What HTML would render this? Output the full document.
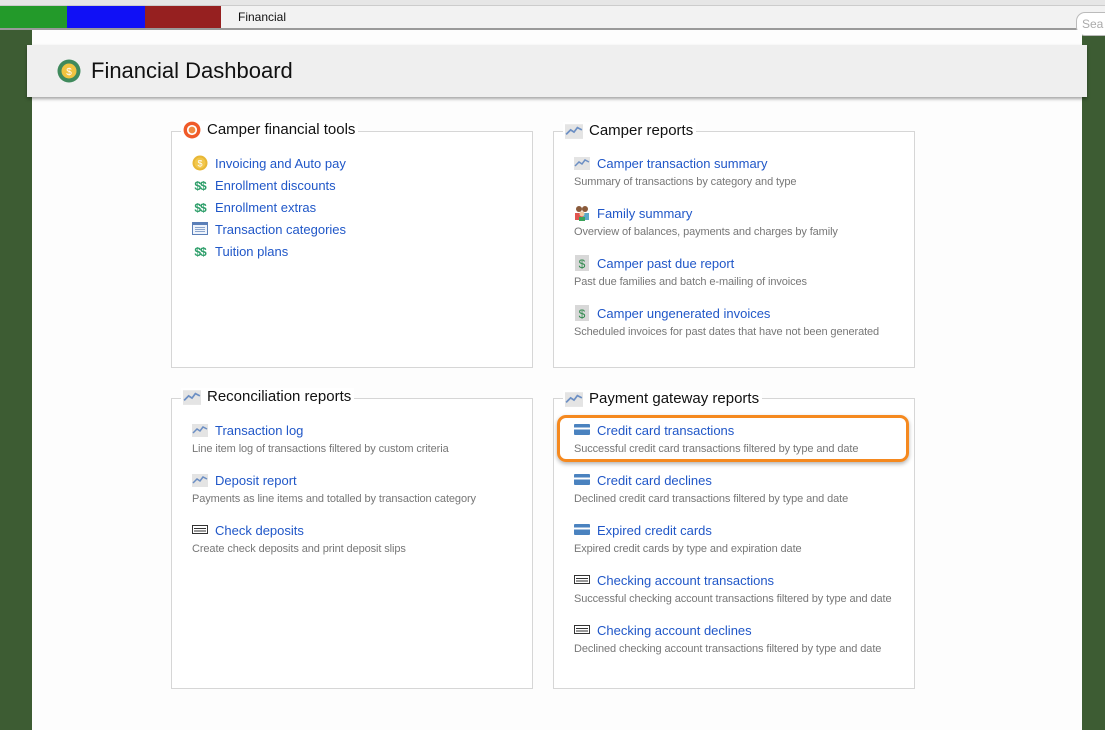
<!DOCTYPE html>
<html><head><meta charset="utf-8"><style>
*{margin:0;padding:0;box-sizing:border-box}
body{width:1105px;height:714px;overflow:hidden;background:#3d5c33;font-family:"Liberation Sans",sans-serif;position:relative}
.a{position:absolute}
.top{left:0;top:0;width:1105px;height:6px;background:#e6e6e6;border-bottom:1px solid #ccc}
.tabs{left:0;top:6px;width:1105px;height:24px;background:#f2f2f2;border-bottom:2px solid #9a9a9a}
.main{left:32px;top:30px;width:1050px;height:700px;background:#fdfdfd}
.hdr{left:27px;top:45px;width:1060px;height:52px;background:#efefef;box-shadow:0 2px 3px rgba(0,0,0,.35)}
.panel{border:1px solid #d6d6d6;background:#fff}
.leg{font-size:15px;color:#111;background:#fff;padding:0 3px 0 2px;height:18px;line-height:18px;display:flex;align-items:center;gap:6px}
.lk{font-size:13px;color:#2057c8;line-height:16px;white-space:nowrap;margin-top:1px}
.ds{font-size:11px;color:#777;line-height:14px;white-space:nowrap;margin-top:1px;letter-spacing:-0.1px}
.ic{position:absolute;width:16px;height:16px}
</style></head><body>
<div class="a top"></div>
<div class="a tabs">
<div class="a" style="left:0;top:0;width:67px;height:22px;background:#239a2a"></div>
<div class="a" style="left:67px;top:0;width:78px;height:22px;background:#1010f6"></div>
<div class="a" style="left:145px;top:0;width:76px;height:22px;background:#962020"></div>
<div class="a" style="left:238px;top:4px;font-size:12px;color:#111">Financial</div>
<div class="a" style="left:1076px;top:6px;width:40px;height:24px;border:1px solid #bbb;border-radius:9px;background:#fff;font-size:12px;color:#aaa;padding:4px 5px">Sea</div>
</div>
<div class="a main"></div>
<div class="a hdr">
<svg class="a" style="left:30px;top:14px" width="24" height="24"><circle cx="12" cy="12" r="11.5" fill="#3f8a5c"/><circle cx="12" cy="12" r="7.5" fill="#f0c341"/><text x="12" y="16" font-size="10" text-anchor="middle" fill="#fff" font-family="Liberation Sans">$</text></svg>
<div class="a" style="left:64px;top:13px;font-size:22px;color:#111">Financial Dashboard</div>
</div>

<div class="a panel" style="left:171px;top:131px;width:362px;height:237px"></div>
<div class="a panel" style="left:553px;top:131px;width:362px;height:237px"></div>
<div class="a panel" style="left:171px;top:398px;width:362px;height:291px"></div>
<div class="a panel" style="left:553px;top:398px;width:362px;height:291px"></div>

<svg width="0" height="0" style="position:absolute"><defs>
<symbol id="chart" viewBox="0 0 16 16"><rect x="0" y="2" width="16" height="13" fill="#e4e4e4"/><polyline points="1,11 5,7 8,9 11,5 15,7" fill="none" stroke="#6c8fc4" stroke-width="1.5"/></symbol>
<symbol id="card" viewBox="0 0 16 16"><rect x="0" y="2" width="16" height="11" rx="1" fill="#4a82bf"/><rect x="0" y="5.5" width="16" height="2" fill="#fff"/></symbol>
<symbol id="check" viewBox="0 0 16 16"><rect x="0.5" y="3.5" width="15" height="8" fill="#fff" stroke="#333"/><rect x="2" y="6" width="12" height="1" fill="#333"/><rect x="2" y="8.5" width="12" height="1" fill="#333"/></symbol>
<symbol id="bill" viewBox="0 0 16 16"><rect x="1" y="0" width="14" height="16" fill="#d8d8d8"/><text x="8" y="13" font-size="12" text-anchor="middle" fill="#2f8a4d" font-family="Liberation Sans">$</text></symbol>
<symbol id="dd" viewBox="0 0 16 16"><text x="8" y="13" font-size="12" font-weight="bold" text-anchor="middle" fill="#2e9e6a" font-family="Liberation Sans" letter-spacing="-1">$$</text></symbol>
<symbol id="coin" viewBox="0 0 16 16"><circle cx="8" cy="8" r="7.5" fill="#e8b736"/><circle cx="8" cy="8" r="5.5" fill="#f2c74b"/><text x="8" y="11.5" font-size="9" text-anchor="middle" fill="#fff" font-family="Liberation Sans">$</text></symbol>
<symbol id="list" viewBox="0 0 16 16"><rect x="0.5" y="1.5" width="15" height="12" fill="#eef3fb" stroke="#5b7fb8"/><rect x="1" y="2" width="14" height="2" fill="#5b7fb8"/><g fill="#8aa4cc"><rect x="3" y="6" width="10" height="1"/><rect x="3" y="8" width="10" height="1"/><rect x="3" y="10" width="10" height="1"/></g></symbol>
<symbol id="fam" viewBox="0 0 16 16"><circle cx="5" cy="4" r="3" fill="#8a5a3a"/><circle cx="11" cy="4" r="3" fill="#8a5a3a"/><rect x="1" y="8" width="8" height="7" fill="#e0554f"/><rect x="9" y="8" width="6" height="7" fill="#5aa8c8"/><circle cx="8" cy="9" r="2.5" fill="#f0c9a0"/><rect x="5" y="12" width="6" height="4" fill="#3aa35a"/></symbol>
<symbol id="gear" viewBox="0 0 16 16"><circle cx="8" cy="8" r="7.5" fill="#f05a28"/><circle cx="8" cy="8" r="4.5" fill="#fff"/><circle cx="8" cy="8" r="3" fill="#f08a40"/></symbol>
</defs></svg>

<div class="a leg" style="left:181px;top:121px"><svg width="18" height="18"><use href="#gear"/></svg>Camper financial tools</div>
<div class="a leg" style="left:563px;top:122px"><svg width="18" height="18"><use href="#chart"/></svg>Camper reports</div>
<div class="a leg" style="left:181px;top:388px"><svg width="18" height="18"><use href="#chart"/></svg>Reconciliation reports</div>
<div class="a leg" style="left:563px;top:390px"><svg width="18" height="18"><use href="#chart"/></svg>Payment gateway reports</div>

<svg class="ic" style="left:192px;top:155px"><use href="#coin"/></svg><div class="a lk" style="left:215px;top:155px">Invoicing and Auto pay</div>
<svg class="ic" style="left:192px;top:177px"><use href="#dd"/></svg><div class="a lk" style="left:215px;top:177px">Enrollment discounts</div>
<svg class="ic" style="left:192px;top:199px"><use href="#dd"/></svg><div class="a lk" style="left:215px;top:199px">Enrollment extras</div>
<svg class="ic" style="left:192px;top:221px"><use href="#list"/></svg><div class="a lk" style="left:215px;top:221px">Transaction categories</div>
<svg class="ic" style="left:192px;top:243px"><use href="#dd"/></svg><div class="a lk" style="left:215px;top:243px">Tuition plans</div>

<svg class="ic" style="left:574px;top:155px"><use href="#chart"/></svg><div class="a lk" style="left:597px;top:155px">Camper transaction summary</div><div class="a ds" style="left:574px;top:174px">Summary of transactions by category and type</div>
<svg class="ic" style="left:574px;top:205px"><use href="#fam"/></svg><div class="a lk" style="left:597px;top:205px">Family summary</div><div class="a ds" style="left:574px;top:224px">Overview of balances, payments and charges by family</div>
<svg class="ic" style="left:574px;top:255px"><use href="#bill"/></svg><div class="a lk" style="left:597px;top:255px">Camper past due report</div><div class="a ds" style="left:574px;top:274px">Past due families and batch e-mailing of invoices</div>
<svg class="ic" style="left:574px;top:305px"><use href="#bill"/></svg><div class="a lk" style="left:597px;top:305px">Camper ungenerated invoices</div><div class="a ds" style="left:574px;top:324px">Scheduled invoices for past dates that have not been generated</div>

<svg class="ic" style="left:192px;top:422px"><use href="#chart"/></svg><div class="a lk" style="left:215px;top:422px">Transaction log</div><div class="a ds" style="left:192px;top:441px">Line item log of transactions filtered by custom criteria</div>
<svg class="ic" style="left:192px;top:472px"><use href="#chart"/></svg><div class="a lk" style="left:215px;top:472px">Deposit report</div><div class="a ds" style="left:192px;top:491px">Payments as line items and totalled by transaction category</div>
<svg class="ic" style="left:192px;top:522px"><use href="#check"/></svg><div class="a lk" style="left:215px;top:522px">Check deposits</div><div class="a ds" style="left:192px;top:541px">Create check deposits and print deposit slips</div>

<div class="a" style="left:557px;top:415px;width:352px;height:47px;border:3px solid #f5891f;border-radius:9px;box-shadow:0 2px 4px rgba(0,0,0,.3)"></div>
<svg class="ic" style="left:574px;top:422px"><use href="#card"/></svg><div class="a lk" style="left:597px;top:422px">Credit card transactions</div><div class="a ds" style="left:574px;top:441px">Successful credit card transactions filtered by type and date</div>
<svg class="ic" style="left:574px;top:472px"><use href="#card"/></svg><div class="a lk" style="left:597px;top:472px">Credit card declines</div><div class="a ds" style="left:574px;top:491px">Declined credit card transactions filtered by type and date</div>
<svg class="ic" style="left:574px;top:522px"><use href="#card"/></svg><div class="a lk" style="left:597px;top:522px">Expired credit cards</div><div class="a ds" style="left:574px;top:541px">Expired credit cards by type and expiration date</div>
<svg class="ic" style="left:574px;top:572px"><use href="#check"/></svg><div class="a lk" style="left:597px;top:572px">Checking account transactions</div><div class="a ds" style="left:574px;top:591px">Successful checking account transactions filtered by type and date</div>
<svg class="ic" style="left:574px;top:622px"><use href="#check"/></svg><div class="a lk" style="left:597px;top:622px">Checking account declines</div><div class="a ds" style="left:574px;top:641px">Declined checking account transactions filtered by type and date</div>
</body></html>
